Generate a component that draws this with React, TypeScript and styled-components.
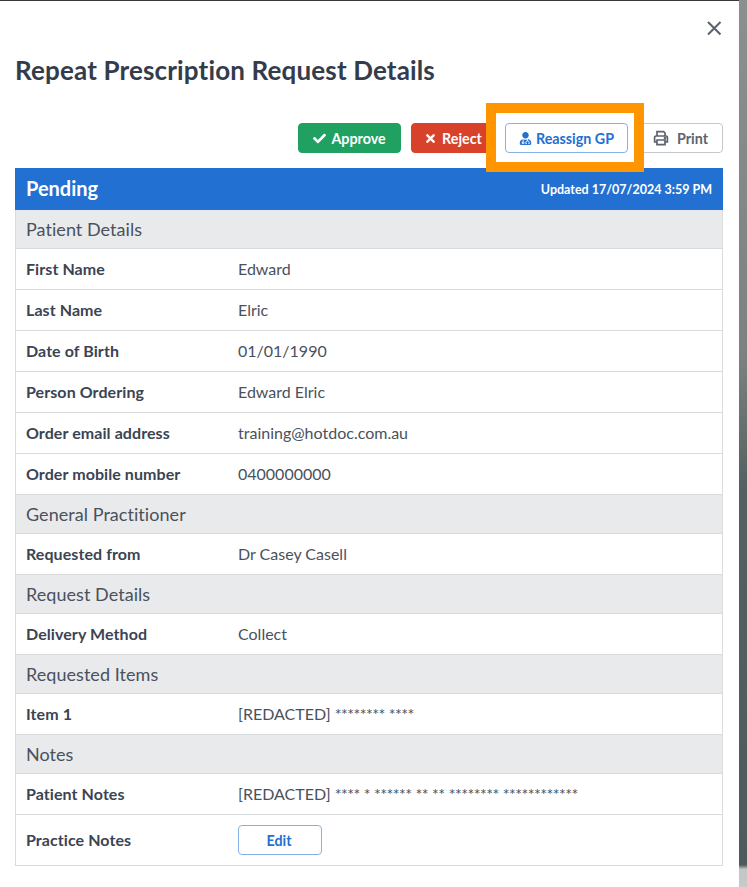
import React from "react";
import styled, { createGlobalStyle } from "styled-components";
import { FaCheck, FaTimes, FaUserMd } from "react-icons/fa";

const Global = createGlobalStyle`
  html, body { margin: 0; padding: 0; height: 100%; overflow: hidden; }
  body { font-family: Lato, "Liberation Sans", sans-serif; color: #333c4b; background: #fff; }
`;

const Page = styled.div`
  width: 747px;
  height: 887px;
  display: flex;
  overflow: hidden;
  background: linear-gradient(180deg, #8d8f8f 0%, #7d8181 40%, #566060 55%, #4f5a5a 97.5%, #c4c6c6 98%, #c8caca 100%);
`;

const Modal = styled.main`
  width: 739px;
  height: 887px;
  box-sizing: border-box;
  background: #fff;
  border-top: 1px solid #3a3a3a;
  padding: 0 16px 0 15px;
  position: relative;
  display: flex;
  flex-direction: column;
`;

const CloseButton = styled.button`
  position: absolute;
  top: 18px;
  right: 16px;
  width: 18px;
  height: 18px;
  padding: 0;
  border: 0;
  background: none;
  color: #5c6370;
  display: flex;
`;

const Title = styled.h1`
  margin: 53px 0 0;
  height: 33px;
  font-size: 26px;
  line-height: 32px;
  font-weight: 700;
  letter-spacing: 0.15px;
  color: #333c4b;
`;

const Toolbar = styled.div`
  margin-top: 36px;
  display: flex;
  justify-content: flex-end;
  gap: 10px;
  position: relative;
`;

const Action = styled.button<{ $bg: string; $fg: string; $line: string; $w: number; $gap?: number }>`
  width: ${(p) => p.$w}px;
  height: 30px;
  box-sizing: border-box;
  padding: 3px 0 0;
  border: 1px solid ${(p) => p.$line};
  border-radius: 4px;
  background: ${(p) => p.$bg};
  color: ${(p) => p.$fg};
  font: 700 14.3px/1 Lato, sans-serif;
  display: flex;
  align-items: center;
  justify-content: center;
  gap: ${(p) => p.$gap ?? 5}px;
  svg { margin-top: -3px; flex: none; }
`;

const Highlight = styled.div`
  position: absolute;
  left: 471px;
  top: -20px;
  width: 158px;
  height: 69px;
  box-sizing: border-box;
  border: 10px solid #ff9500;
  pointer-events: none;
`;

const Card = styled.section`
  margin-top: 15px;
  width: 708px;
  box-sizing: border-box;
  display: flex;
  flex-direction: column;
`;

const StatusBar = styled.header`
  height: 42px;
  box-sizing: border-box;
  padding: 0 11px;
  background: #2170d2;
  color: #fff;
  display: flex;
  align-items: center;
  justify-content: space-between;
`;

const Status = styled.span`
  font-size: 20px;
  font-weight: 700;
  margin-top: -2px;
`;

const Updated = styled.span`
  font-size: 12.5px;
  font-weight: 700;
`;

const Body = styled.div`
  border: 1px solid #d9dbdd;
  border-top: 0;
`;

const Section = styled.div`
  height: 39px;
  box-sizing: border-box;
  padding: 0 10px;
  background: #e9eaec;
  border-bottom: 1px solid #d9dbdd;
  display: flex;
  align-items: center;
  font-size: 18px;
  letter-spacing: 0.05px;
  color: #4a515d;
`;

const Row = styled.div<{ $h?: number }>`
  height: ${(p) => p.$h ?? 41}px;
  box-sizing: border-box;
  padding: 0 10px 2px;
  display: grid;
  grid-template-columns: 212px 1fr;
  align-items: center;
  border-bottom: 1px solid #d9dbdd;
  font-size: 16px;
  &:last-child { border-bottom: 0; }
`;

const Label = styled.span`
  font-weight: 700;
  letter-spacing: 0.08px;
  color: #3b4453;
`;

const Value = styled.span`
  color: #4a515d;
`;

const Stars = styled.span`
  letter-spacing: -0.55px;
  word-spacing: 0.5px;
`;

const EditCell = styled.span`
  display: block;
  margin-bottom: -2px;
`;

const EditButton = styled.button`
  width: 84px;
  height: 30px;
  box-sizing: border-box;
  border: 1px solid #86b2ea;
  border-radius: 4px;
  background: #fff;
  color: #2170d2;
  font: 700 14.3px/1 Lato, sans-serif;
  padding: 2px 2px 0 0;
  display: block;
`;

const PrintIcon = () => (
  <svg width="16" height="16" viewBox="0 0 16 16" fill="none" stroke="currentColor" strokeWidth="1.7">
    <path d="M4 6V1.6h6.6L12 3v3" />
    <path d="M4 12H1.6V7.4a1.4 1.4 0 0 1 1.4-1.4h10a1.4 1.4 0 0 1 1.4 1.4V12H12" />
    <path d="M4 10h8v4.6H4z" />
    <circle cx="12" cy="8.2" r=".5" fill="currentColor" />
  </svg>
);

const CloseIcon = () => (
  <svg width="18" height="18" viewBox="0 0 18 18" fill="none" stroke="currentColor" strokeWidth="2.1">
    <path d="M3 3l12.5 12.5M15.5 3L3 15.5" />
  </svg>
);

type Item = { label: string; value: string; stars?: string };
const groups: { title: string; items: Item[] }[] = [
  {
    title: "Patient Details",
    items: [
      { label: "First Name", value: "Edward" },
      { label: "Last Name", value: "Elric" },
      { label: "Date of Birth", value: "01/01/1990" },
      { label: "Person Ordering", value: "Edward Elric" },
      { label: "Order email address", value: "training@hotdoc.com.au" },
      { label: "Order mobile number", value: "0400000000" },
    ],
  },
  { title: "General Practitioner", items: [{ label: "Requested from", value: "Dr Casey Casell" }] },
  { title: "Request Details", items: [{ label: "Delivery Method", value: "Collect" }] },
  { title: "Requested Items", items: [{ label: "Item 1", value: "[REDACTED] ", stars: "******** ****" }] },
  {
    title: "Notes",
    items: [{ label: "Patient Notes", value: "[REDACTED] ", stars: "**** * ****** ** ** ******** ************" }],
  },
];

export default function App() {
  return (
    <Page>
      <Global />
      <Modal>
        <CloseButton aria-label="Close"><CloseIcon /></CloseButton>
        <Title>Repeat Prescription Request Details</Title>
        <Toolbar>
          <Action $w={103} $bg="#20a162" $fg="#fff" $line="#20a162"><FaCheck size={13} />Approve</Action>
          <Action $w={84} $bg="#d8412a" $fg="#fff" $line="#d8412a"><FaTimes size={13} />Reject</Action>
          <Action $w={123} $bg="#fff" $fg="#2170d2" $line="#86b2ea" $gap={4}><FaUserMd size={13} />Reassign GP</Action>
          <Action $w={85} $bg="#fff" $fg="#5c6370" $line="#c5c8cc" $gap={8}><PrintIcon />Print</Action>
          <Highlight />
        </Toolbar>
        <Card>
          <StatusBar>
            <Status>Pending</Status>
            <Updated>Updated 17/07/2024 3:59 PM</Updated>
          </StatusBar>
          <Body>
            {groups.map((g) => (
              <React.Fragment key={g.title}>
                <Section>{g.title}</Section>
                {g.items.map((i) => (
                  <Row key={i.label}>
                    <Label>{i.label}</Label>
                    <Value>{i.value}{i.stars && <Stars>{i.stars}</Stars>}</Value>
                  </Row>
                ))}
              </React.Fragment>
            ))}
            <Row $h={50}>
              <Label>Practice Notes</Label>
              <EditCell><EditButton>Edit</EditButton></EditCell>
            </Row>
          </Body>
        </Card>
      </Modal>
    </Page>
  );
}
